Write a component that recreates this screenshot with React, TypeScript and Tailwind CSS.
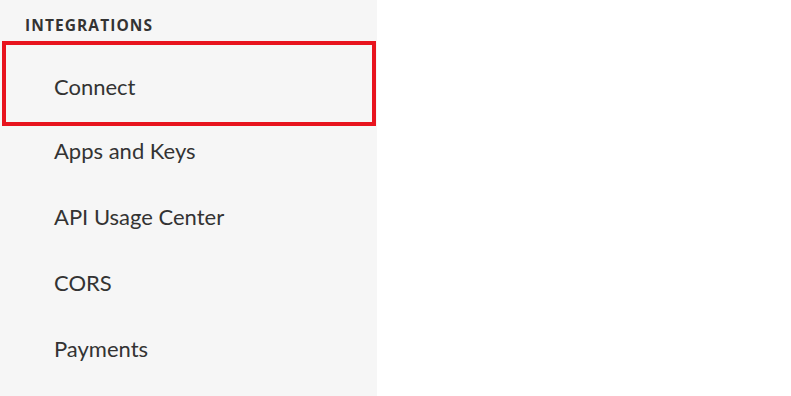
const ITEMS = ['Apps and Keys', 'API Usage Center', 'CORS', 'Payments'];

export default function App() {
  return (
    <div className="flex h-[396px] w-[791px] bg-white">
      <aside className="flex h-full w-[377px] flex-col bg-[#f6f6f6]">
        <div className="h-[41px] pl-[25px] pt-[16px]">
          <span
            className="block text-[15.5px] font-bold leading-[18px] tracking-[0.07em] text-[#333]"
            style={{ fontFamily: '"Open Sans", sans-serif' }}
          >
            INTEGRATIONS
          </span>
        </div>

        {/* highlighted item */}
        <div className="ml-[2px] flex h-[85px] w-[374px] items-center border-[4px] border-[#e8141e] pl-[48px] pt-[6px]">
          <span className="text-[22px] text-[#333]" style={{ fontFamily: 'Lato, sans-serif' }}>
            Connect
          </span>
        </div>

        <nav className="flex flex-col gap-[12px]">
          {ITEMS.map((label) => (
            <div key={label} className="flex h-[54px] items-center pb-[5px] pl-[54px]">
              <span className="text-[22px] text-[#333]" style={{ fontFamily: 'Lato, sans-serif' }}>
                {label}
              </span>
            </div>
          ))}
        </nav>
      </aside>
    </div>
  );
}
